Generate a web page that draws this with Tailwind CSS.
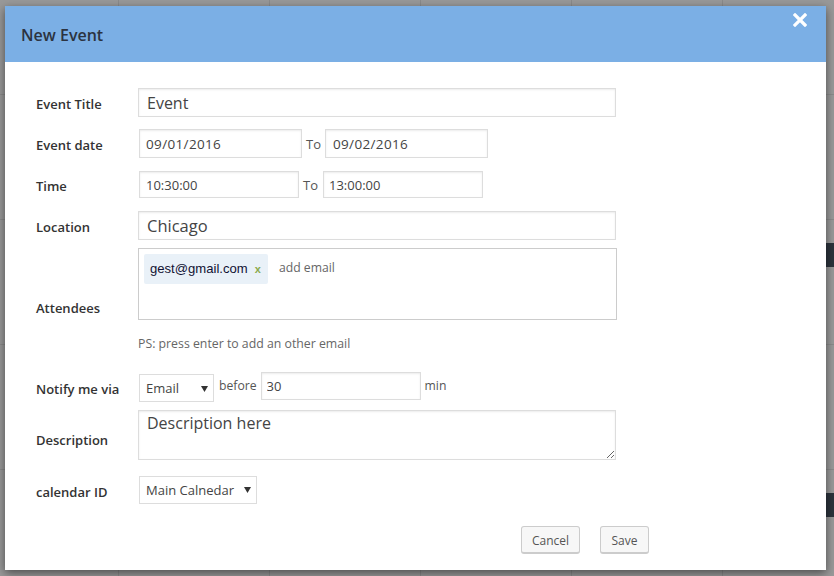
<!DOCTYPE html>
<html lang="en">
<head>
    <meta charset="UTF-8">
    <title>New Event</title>
    <script src="https://cdn.jsdelivr.net/npm/@tailwindcss/browser@4"></script>
</head>
<body class="relative h-[576px] w-[834px] overflow-hidden bg-[#999999] font-['Open_Sans',sans-serif] text-[#333333]">
    <!-- calendar behind the overlay -->
    <div class="absolute inset-0 bg-[linear-gradient(#8b8b8b_1px,transparent_1px),linear-gradient(90deg,#8b8b8b_1px,transparent_1px)] bg-[size:151px_125px] bg-[position:118px_94px]"></div>
    <div class="absolute left-[826px] top-[243px] h-[24px] w-[8px] bg-[#2c333c]"></div>
    <div class="absolute left-[826px] top-[493px] h-[24px] w-[8px] bg-[#2c333c]"></div>

    <div class="absolute left-[5px] top-[6px] h-[564px] w-[821px] bg-white shadow-[0_3px_9px_rgba(0,0,0,0.5)]">
        <div class="relative flex h-[56px] items-center bg-[#7bafe5] pl-[16px] pt-[2px]">
            <h2 class="text-[16px] font-semibold text-[#2b3340]">New Event</h2>
            <svg class="absolute left-[788px] top-[7px] h-[14px] w-[14px]" viewBox="0 0 14 14"><path d="M2 2 12 12M12 2 2 12" stroke="white" stroke-width="3.2" stroke-linecap="square" fill="none"/></svg>
        </div>

        <form class="pl-[31px] pt-[26px] text-[13px]">
            <div class="flex h-[29px] items-center">
                <label class="w-[102px] pt-[4px] font-semibold">Event Title</label>
                <input value="Event" class="h-[29px] w-[478px] border border-[#dddddd] px-[8px] text-[16px] text-[#444444] shadow-[inset_0_1px_2px_rgba(0,0,0,0.08)]">
            </div>

            <div class="mt-[12px] flex h-[29px] items-center">
                <label class="w-[103px] pt-[4px] font-semibold">Event date</label>
                <input value="09/01/2016" class="h-[29px] w-[163px] border border-[#dddddd] px-[6px] text-[13.5px] tracking-[0.35px] text-[#444444] shadow-[inset_0_1px_2px_rgba(0,0,0,0.08)]">
                <span class="ml-[4px] pt-[2px] text-[#555555]">To</span>
                <input value="09/02/2016" class="ml-[4px] h-[29px] w-[163px] border border-[#dddddd] px-[7px] text-[13.5px] tracking-[0.35px] text-[#444444] shadow-[inset_0_1px_2px_rgba(0,0,0,0.08)]">
            </div>

            <div class="mt-[13px] flex h-[27px] items-center">
                <label class="w-[103px] pt-[4px] font-semibold">Time</label>
                <input value="10:30:00" class="h-[27px] w-[160px] border border-[#dddddd] px-[6px] text-[13px] text-[#444444] shadow-[inset_0_1px_2px_rgba(0,0,0,0.08)]">
                <span class="ml-[4px] pt-[2px] text-[#555555]">To</span>
                <input value="13:00:00" class="ml-[5px] h-[27px] w-[160px] border border-[#dddddd] px-[5px] text-[13px] text-[#444444] shadow-[inset_0_1px_2px_rgba(0,0,0,0.08)]">
            </div>

            <div class="mt-[13px] flex h-[29px] items-center">
                <label class="w-[102px] pt-[4px] font-semibold">Location</label>
                <input value="Chicago" class="h-[29px] w-[478px] border border-[#dddddd] px-[8px] text-[16.5px] text-[#444444] shadow-[inset_0_1px_2px_rgba(0,0,0,0.08)]">
            </div>

            <div class="mt-[8px] flex h-[72px] items-center">
                <label class="w-[102px] pt-[49px] font-semibold">Attendees</label>
                <div class="flex h-[72px] w-[479px] items-start border border-[#cccccc] pl-[5px] pt-[5px]">
                    <span class="flex h-[30px] w-[124px] items-center rounded-[2px] bg-[#e9f1f8] pl-[6px] font-['Liberation_Sans',sans-serif] text-[13.1px] text-[#111133]">gest@gmail.com<b class="ml-[7px] text-[11px] text-[#8aa94a]">x</b></span>
                    <span class="ml-[11px] pt-[5px] text-[12.2px] text-[#666666]">add email</span>
                </div>
            </div>

            <p class="ml-[102px] mt-[15px] h-[18px] text-[12.3px] text-[#666666]">PS: press enter to add an other email</p>

            <div class="mt-[19px] flex h-[30px] items-center">
                <label class="w-[103px] pt-[6px] font-semibold">Notify me via</label>
                <div class="relative h-[28px] w-[75px] self-end">
                    <select class="h-full w-full appearance-none border border-[#dddddd] bg-white pl-[6px] pt-[2px] text-[13px] text-[#444444]"><option>Email</option></select>
                    <svg class="absolute left-[62px] top-[12px] h-[6px] w-[7px]" viewBox="0 0 7 6"><path d="M0 0h7L3.5 6z" fill="#333333"/></svg>
                </div>
                <span class="ml-[5px] pb-[1px] text-[12.2px] text-[#555555]">before</span>
                <input value="30" class="ml-[4px] h-[28px] w-[160px] self-start border border-[#dddddd] px-[5px] text-[13px] text-[#444444] shadow-[inset_0_1px_2px_rgba(0,0,0,0.08)]">
                <span class="ml-[4px] pb-[1px] text-[12.2px] text-[#555555]">min</span>
            </div>

            <div class="mt-[8px] flex h-[50px] items-center">
                <label class="w-[102px] pt-[11px] font-semibold">Description</label>
                <textarea class="h-[50px] w-[478px] border border-[#dddddd] px-[8px] py-0 text-[16px] leading-[24px] text-[#444444] shadow-[inset_0_1px_2px_rgba(0,0,0,0.08)]">Description here</textarea>
            </div>

            <div class="mt-[16px] flex h-[28px] items-center">
                <label class="w-[103px] pt-[5px] font-semibold">calendar ID</label>
                <div class="relative h-[28px] w-[118px]">
                    <select class="h-full w-full appearance-none border border-[#dddddd] bg-white pl-[6px] pt-[2px] text-[13px] text-[#444444]"><option>Main Calnedar</option></select>
                    <svg class="absolute left-[105px] top-[11px] h-[6px] w-[7px]" viewBox="0 0 7 6"><path d="M0 0h7L3.5 6z" fill="#333333"/></svg>
                </div>
            </div>

            <div class="ml-[485px] mt-[22px] flex gap-[20px]">
                <button type="button" class="h-[28px] w-[59px] rounded-[3px] border border-b-2 border-[#cccccc] bg-[#f7f7f7] pt-[2px] text-[12px] text-[#555555]">Cancel</button>
                <button type="button" class="h-[28px] w-[49px] rounded-[3px] border border-b-2 border-[#cccccc] bg-[#f7f7f7] pt-[2px] text-[12px] text-[#555555]">Save</button>
            </div>
        </form>
    </div>
</body>
</html>
